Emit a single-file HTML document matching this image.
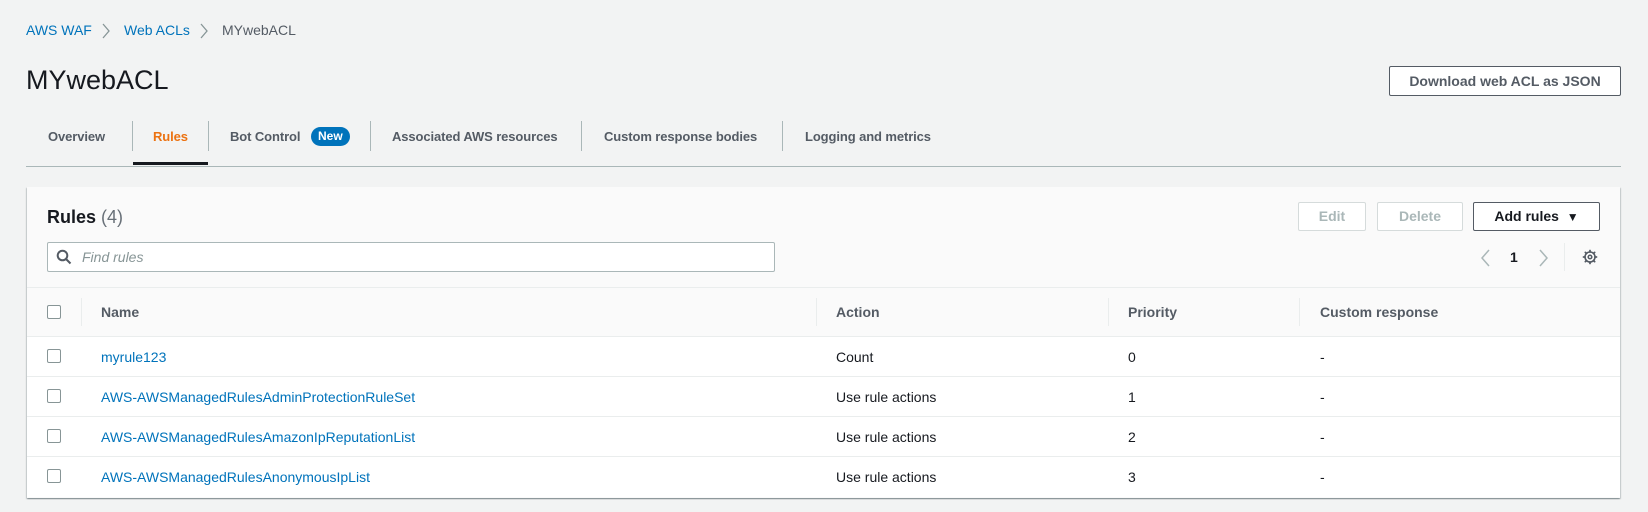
<!DOCTYPE html>
<html><head><meta charset="utf-8"><style>
*{box-sizing:border-box;margin:0;padding:0}
body{width:1648px;height:512px;background:#f2f3f3;font-family:"Liberation Sans",sans-serif;font-size:14px;color:#16191f;position:relative;overflow:hidden}
.a{position:absolute;white-space:nowrap}
.link{color:#0073bb}
.bc{top:22px;font-size:14px}
.tab{top:129px;font-weight:bold;color:#545b64;font-size:13px;letter-spacing:-0.1px;line-height:16px}
.vd{position:absolute;width:1px;background:#aab7b8;top:121px;height:30px}
.btn{position:absolute;border:1px solid #545b64;background:#fff;border-radius:2px;font-weight:bold;color:#545b64;text-align:center;font-size:14px}
.dis{border-color:#d5dbdb;color:#aab7b8}
.cb{position:absolute;left:47px;width:14px;height:14px;border:1.5px solid #879596;border-radius:2px;background:#fff}
.hline{position:absolute;left:27px;width:1593px;height:1px;background:#eaeded}
.th{font-weight:bold;color:#545b64;top:304px}
.td{color:#16191f}
.hd{position:absolute;width:1px;background:#eaeded;top:298px;height:28px}
</style></head><body>
<div class="a bc link" style="left:26px">AWS WAF</div>
<svg class="a" style="left:101px;top:23px" width="10" height="16"><path d="M2 1l6 7-6 7" fill="none" stroke="#879596" stroke-width="1.3"/></svg>
<div class="a bc link" style="left:124px">Web ACLs</div>
<svg class="a" style="left:199px;top:23px" width="10" height="16"><path d="M2 1l6 7-6 7" fill="none" stroke="#879596" stroke-width="1.3"/></svg>
<div class="a bc" style="left:222px;color:#545b64">MYwebACL</div>
<div class="a" style="left:26px;top:65px;font-size:27px;color:#16191f">MYwebACL</div>
<div class="btn" style="left:1389px;top:66px;width:232px;height:30px;line-height:28px">Download web ACL as JSON</div>

<div class="a tab" style="left:48px">Overview</div>
<div class="vd" style="left:132px"></div>
<div class="a tab" style="left:153px;color:#ec7211">Rules</div>
<div class="vd" style="left:208px"></div>
<div class="a tab" style="left:230px">Bot Control</div>
<div class="a" style="left:311px;top:127px;background:#0073bb;color:#fff;border-radius:10px;padding:0 7px;font-size:12px;font-weight:bold;line-height:19px">New</div>
<div class="vd" style="left:370px"></div>
<div class="a tab" style="left:392px">Associated AWS resources</div>
<div class="vd" style="left:581px"></div>
<div class="a tab" style="left:604px">Custom response bodies</div>
<div class="vd" style="left:782px"></div>
<div class="a tab" style="left:805px">Logging and metrics</div>
<div class="a" style="left:26px;top:166px;width:1595px;height:1px;background:#aab7b8"></div>
<div class="a" style="left:133px;top:162px;width:75px;height:3px;background:#16191f"></div>

<div class="a" style="left:27px;top:187px;width:1593px;height:311px;background:#fafafa;box-shadow:0 1px 1px 0 rgba(0,28,36,.3),1px 1px 1px 0 rgba(0,28,36,.15),-1px 1px 1px 0 rgba(0,28,36,.15)"></div>
<div class="a" style="left:47px;top:207px;font-size:18px;font-weight:bold">Rules <span style="font-weight:normal;color:#687078">(4)</span></div>
<div class="btn dis" style="left:1298px;top:202px;width:68px;height:29px;line-height:27px">Edit</div>
<div class="btn dis" style="left:1377px;top:202px;width:86px;height:29px;line-height:27px">Delete</div>
<div class="btn" style="left:1473px;top:202px;width:127px;height:29px;line-height:27px;color:#16191f">Add rules &nbsp;<span style="font-size:12px">▼</span></div>
<div class="a" style="left:47px;top:242px;width:728px;height:30px;border:1px solid #aab7b8;background:#fff;border-radius:2px"></div>
<svg class="a" style="left:56px;top:249px" width="16" height="16"><circle cx="6.5" cy="6.5" r="4.8" fill="none" stroke="#545b64" stroke-width="2"/><path d="M10 10l4.5 4.5" stroke="#545b64" stroke-width="2"/></svg>
<div class="a" style="left:82px;top:249px;font-style:italic;color:#879596">Find rules</div>
<svg class="a" style="left:1480px;top:249px" width="12" height="18"><path d="M9 1L2 9l7 8" fill="none" stroke="#aab7b8" stroke-width="1.5"/></svg>
<div class="a" style="left:1510px;top:249px;font-weight:bold">1</div>
<svg class="a" style="left:1537px;top:249px" width="12" height="18"><path d="M3 1l7 8-7 8" fill="none" stroke="#aab7b8" stroke-width="1.5"/></svg>
<div class="a" style="left:1564px;top:243px;width:1px;height:28px;background:#eaeded"></div>
<svg class="a" style="left:1582px;top:249px" width="16" height="16" viewBox="0 0 16 16"><g stroke="#545b64" stroke-width="1.8" stroke-linecap="round"><path d="M8 1.5v1.5M8 13v1.5M1.5 8H3M13 8h1.5M3.4 3.4l1 1M11.6 11.6l1 1M3.4 12.6l1-1M11.6 4.4l1-1"/></g><circle cx="8" cy="8" r="5" fill="none" stroke="#545b64" stroke-width="1.6"/><circle cx="8" cy="8" r="1.8" fill="none" stroke="#545b64" stroke-width="1.5"/></svg>

<div class="hline" style="top:287px"></div>
<div class="cb" style="top:305px"></div>
<div class="hd" style="left:81px"></div>
<div class="a th" style="left:101px">Name</div>
<div class="hd" style="left:816px"></div>
<div class="a th" style="left:836px">Action</div>
<div class="hd" style="left:1108px"></div>
<div class="a th" style="left:1128px">Priority</div>
<div class="hd" style="left:1299px"></div>
<div class="a th" style="left:1320px">Custom response</div>

<div class="a" style="left:27px;top:336px;width:1593px;height:161px;background:#fff"></div>
<div class="hline" style="top:336px"></div>
<div class="hline" style="top:376px"></div>
<div class="hline" style="top:416px"></div>
<div class="hline" style="top:456px"></div>

<div class="cb" style="top:349px"></div>
<div class="a link" style="left:101px;top:349px">myrule123</div>
<div class="a td" style="left:836px;top:349px">Count</div>
<div class="a td" style="left:1128px;top:349px">0</div>
<div class="a td" style="left:1320px;top:349px">-</div>

<div class="cb" style="top:389px"></div>
<div class="a link" style="left:101px;top:389px">AWS-AWSManagedRulesAdminProtectionRuleSet</div>
<div class="a td" style="left:836px;top:389px">Use rule actions</div>
<div class="a td" style="left:1128px;top:389px">1</div>
<div class="a td" style="left:1320px;top:389px">-</div>

<div class="cb" style="top:429px"></div>
<div class="a link" style="left:101px;top:429px">AWS-AWSManagedRulesAmazonIpReputationList</div>
<div class="a td" style="left:836px;top:429px">Use rule actions</div>
<div class="a td" style="left:1128px;top:429px">2</div>
<div class="a td" style="left:1320px;top:429px">-</div>

<div class="cb" style="top:469px"></div>
<div class="a link" style="left:101px;top:469px">AWS-AWSManagedRulesAnonymousIpList</div>
<div class="a td" style="left:836px;top:469px">Use rule actions</div>
<div class="a td" style="left:1128px;top:469px">3</div>
<div class="a td" style="left:1320px;top:469px">-</div>
</body></html>
